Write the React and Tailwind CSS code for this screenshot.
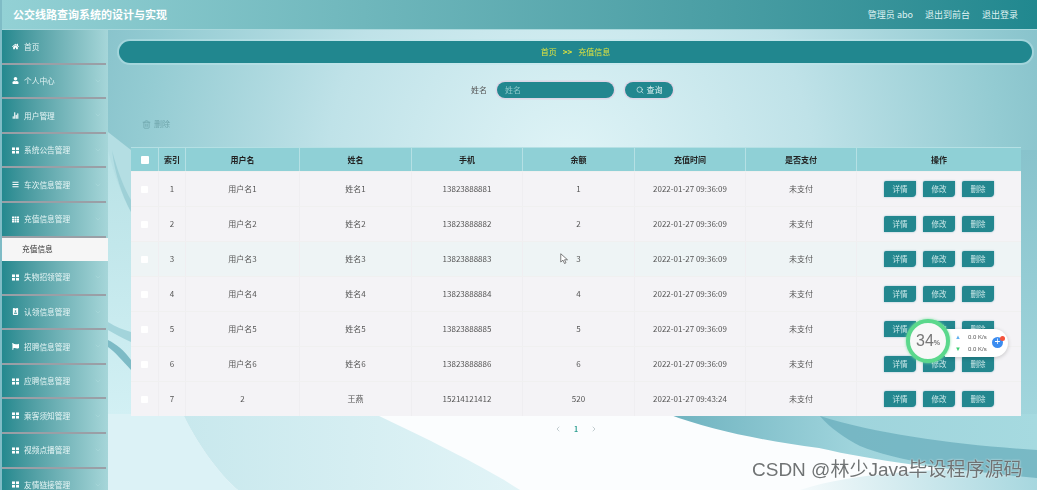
import React from "react";
import { FaHome, FaUser, FaBars, FaTh, FaFlag, FaIdBadge } from "react-icons/fa";
import { IoStatsChart } from "react-icons/io5";
import { LuSearch, LuTrash2, LuChevronLeft, LuChevronRight, LuChevronDown } from "react-icons/lu";

const GridIcon = () => (
  <svg viewBox="0 0 8 8" className="w-[7px] h-[7px]" fill="currentColor">
    <rect x="0" y="0.5" width="3.4" height="3" />
    <rect x="4.6" y="0.5" width="3.4" height="3" />
    <rect x="0" y="4.5" width="3.4" height="3" />
    <rect x="4.6" y="4.5" width="3.4" height="3" />
  </svg>
);

const menus = [
  { label: "首页", icon: <FaHome />, plain: true },
  { label: "个人中心", icon: <FaUser /> },
  { label: "用户管理", icon: <IoStatsChart /> },
  { label: "系统公告管理", icon: <GridIcon /> },
  { label: "车次信息管理", icon: <FaBars /> },
  { label: "充值信息管理", icon: <FaTh />, open: true },
  { label: "失物招领管理", icon: <GridIcon /> },
  { label: "认领信息管理", icon: <FaIdBadge /> },
  { label: "招聘信息管理", icon: <FaFlag /> },
  { label: "应聘信息管理", icon: <GridIcon /> },
  { label: "乘客须知管理", icon: <GridIcon /> },
  { label: "视频点播管理", icon: <GridIcon /> },
  { label: "友情链接管理", icon: <GridIcon /> },
];

const rows = [1, 2, 3, 4, 5, 6].map((i) => ({
  id: i,
  user: `用户名${i}`,
  name: `姓名${i}`,
  phone: `1382388888${i}`,
  balance: i,
  time: "2022-01-27 09:36:09",
}));
rows.push({ id: 7, user: "2", name: "王燕", phone: "15214121412", balance: 520, time: "2022-01-27 09:43:24" });

const columns = "grid grid-cols-[27px_27px_114px_112px_111px_112px_111px_111px_1fr]";

const Background = () => (
  <svg viewBox="0 0 1037 490" className="absolute inset-0 w-full h-full" preserveAspectRatio="none">
    <defs>
      <radialGradient id="sky" gradientUnits="userSpaceOnUse" cx="570" cy="170" r="540">
        <stop offset="0" stopColor="#e0f4f7" />
        <stop offset="0.45" stopColor="#bfe2e8" />
        <stop offset="0.8" stopColor="#93cbd2" />
        <stop offset="1" stopColor="#7fbcc6" />
      </radialGradient>
      <linearGradient id="leftStrip" x1="0" y1="0" x2="0" y2="1">
        <stop offset="0" stopColor="#b9e2e6" />
        <stop offset="1" stopColor="#d2f0f4" />
      </linearGradient>
      <linearGradient id="rightStrip" x1="0" y1="0" x2="0" y2="1">
        <stop offset="0" stopColor="#88c3cc" />
        <stop offset="1" stopColor="#a2d6dd" />
      </linearGradient>
      <linearGradient id="band" x1="0" y1="0" x2="1" y2="0">
        <stop offset="0" stopColor="#c8e8ed" />
        <stop offset="1" stopColor="#e2f4f7" />
      </linearGradient>
      <linearGradient id="wave" gradientUnits="userSpaceOnUse" x1="670" y1="416" x2="1037" y2="416">
        <stop offset="0" stopColor="#6eb2bf" />
        <stop offset="0.5" stopColor="#9fd4dc" />
        <stop offset="1" stopColor="#a6dae0" />
      </linearGradient>
      <linearGradient id="waveLow" gradientUnits="userSpaceOnUse" x1="780" y1="490" x2="1037" y2="450">
        <stop offset="0" stopColor="#fbfdfe" />
        <stop offset="1" stopColor="#a5d6de" />
      </linearGradient>
    </defs>
    <rect width="1037" height="490" fill="url(#sky)" />
    <rect x="106" y="150" width="27" height="266" fill="url(#leftStrip)" />
    <rect x="1019" y="150" width="18" height="270" fill="url(#rightStrip)" />
    <path d="M108 132 L131 150 L131 212 C 122 195 114 175 108 150 Z" fill="#b4dee3" />
    <path d="M112 150 C 117 170 124 188 131 200 L131 212 C 122 195 115 175 112 150 Z" fill="#9ed0d7" />
    <path d="M108 322 C 116 327 124 330 131 332 L131 342 C 122 338 115 334 108 330 Z" fill="#a3d4db" />
    <path d="M108 340 C 116 344 124 350 131 360 L131 370 C 122 360 115 352 108 347 Z" fill="#7dbbc6" />
    <rect x="106" y="414" width="931" height="76" fill="#fbfdfe" />
    <path d="M106 414 L183 414 C 200 450 225 480 238 490 L106 490 Z" fill="#dcf2f6" />
    <path d="M183 414 L375 414 C 430 440 490 470 520 490 L238 490 C 225 480 200 450 183 414 Z" fill="url(#band)" />
    <path d="M800 490 C 860 470 950 470 1037 465 L1037 490 Z" fill="url(#waveLow)" />
    <path d="M668 414 L1037 414 L1037 478 C 950 470 880 462 819 448 C 760 440 710 430 668 414 Z" fill="url(#wave)" />
    <path d="M820 416 C 880 435 960 445 1037 450 L1037 478 C 970 472 900 462 860 446 C 845 438 830 428 820 416 Z" fill="#69aebc" opacity="0.75" />
  </svg>
);

const Sidebar = () => (
  <aside className="w-[106px] shrink-0">
    {menus.map((m) => (
      <div key={m.label}>
        <div className="relative h-[34.6px] pb-[2px] bg-gradient-to-r from-[#23898f] to-[#a6d6d9]">
          <div className="h-full flex items-center pl-[10px] text-[7.7px] text-[#e4f4f4]">
            <span className="w-[12px] flex items-center text-[7px] text-white">{m.icon}</span>
            <span>{m.label}</span>
            {!m.plain && <LuChevronDown className="ml-auto mr-[6px] text-[8px] text-[#a9d8da]" />}
          </div>
          <div className="absolute left-0 bottom-0 w-[104px] h-[2px] bg-[#9a9fa6]" />
        </div>
        {m.open && (
          <div className="h-[23.4px] bg-[#f6f6f6] flex items-center pl-[20px] pb-[1px] text-[7.7px] text-[#333]">充值信息</div>
        )}
      </div>
    ))}
  </aside>
);

const Table = () => (
  <div className="w-[890px] text-[8px] text-[#555]">
    <div className={`${columns} h-[24px] bg-[#8fd0d6] text-[#222] font-bold border-t border-[#b5e0e4]`}>
      <div className="flex items-center justify-center">
        <span className="w-[8px] h-[8px] bg-white rounded-[1px]" />
      </div>
      {["索引", "用户名", "姓名", "手机", "余额", "充值时间", "是否支付", "操作"].map((h) => (
        <div key={h} className="flex items-center justify-center border-l border-[#b5e0e4]">{h}</div>
      ))}
    </div>
    {rows.map((r) => (
      <div key={r.id} className={`${columns} h-[35px] ${r.id === 3 ? "bg-[#eef4f5]" : "bg-[#f4f3f6]"} border-t border-[#f0f0f0]`}>
        <div className="flex items-center justify-center">
          <span className="w-[7px] h-[7px] bg-white rounded-[1px]" />
        </div>
        {[r.id, r.user, r.name, r.phone, r.balance, r.time, "未支付"].map((v, i) => (
          <div key={i} className="flex items-center justify-center border-l border-[#efeef1]">{v}</div>
        ))}
        <div className="flex items-center justify-center gap-[7px] border-l border-[#efeef1]">
          {["详情", "修改", "删除"].map((b) => (
            <button
              key={b}
              className="w-[32px] h-[16px] bg-[#23878f] text-[#cfe9ea] text-[7.5px] rounded-tl-[2px] rounded-br-[4px] shadow-[0_0_2px_#8fb8c8]"
            >
              {b}
            </button>
          ))}
        </div>
      </div>
    ))}
  </div>
);

const NetWidget = () => (
  <div className="absolute left-[906px] top-[319px] flex items-start font-['Liberation_Sans',sans-serif]">
    <div className="relative z-10 w-[44px] h-[44px] rounded-full bg-[#f8f8f8] border-[4px] border-[#5bd88c] shadow-[0_0_3px_#7fe0a4] flex items-center justify-center text-[#777]">
      <span className="text-[16px] leading-none">34</span>
      <span className="text-[7px] font-bold mt-[4px]">%</span>
    </div>
    <div className="relative -ml-[5px] mt-[10px] w-[63px] h-[28px] rounded-r-full bg-white shadow-[0_1px_4px_rgba(0,0,0,0.2)] pl-[10px] text-[6px] leading-none text-[#555] flex flex-col justify-center gap-[6px]">
      <div className="w-fit flex items-center gap-[7px]"><span className="text-[#60b0f0] text-[6px]">▲</span><span>0.0 K/s</span></div>
      <div className="w-fit flex items-center gap-[7px]"><span className="text-[#3ecf74] text-[6px]">▼</span><span>0.0 K/s</span></div>
      <span className="absolute right-[5px] top-[8px] w-[11px] h-[11px] rounded-full bg-[#3b8cf0] text-white text-[10px] leading-[10px] text-center">+</span>
      <span className="absolute right-[3px] top-[7px] w-[5px] h-[5px] rounded-full bg-[#f4523b]" />
    </div>
  </div>
);

export default function App() {
  return (
    <div className="relative w-[1037px] h-[490px] overflow-hidden bg-white font-['Noto_Sans_CJK_SC','Liberation_Sans',sans-serif]">
      <Background />
      <div className="relative h-full pl-[2px] blur-[0.4px]">
        <header className="relative h-[30px] flex items-center pl-[11px] pr-[19px] bg-gradient-to-r from-[#93d1d5] to-[#20888f] border-b border-[#a9d8dc] text-white">
          <h1 className="text-[11px] font-bold">公交线路查询系统的设计与实现</h1>
          <div className="ml-auto flex gap-[12px] text-[9px] text-[#dff2f2]">
            <span>管理员 abo</span>
            <span>退出到前台</span>
            <span>退出登录</span>
          </div>
        </header>
        <div className="relative flex">
          <Sidebar />
          <main className="flex-1 pl-[13px] pt-[11px]">
            <div className="w-[913px] h-[22px] -ml-[2px] rounded-full bg-[#21878f] shadow-[0_0_0_2px_rgba(190,230,235,0.45)] flex items-center justify-center text-[8px] text-[#dfe23f] gap-[6px]">
              <span>首页</span><span className="font-bold">&gt;&gt;</span><span>充值信息</span>
            </div>
            <div className="mt-[18px] h-[18px] flex items-center pl-[350px] text-[8px] text-[#555]">
              <span>姓名</span>
              <div className="ml-[10px] w-[117px] h-[16px] rounded-full bg-[#23878f] shadow-[0_0_0_1.5px_#dcd6e6] pl-[8px] flex items-center text-[#8fc9cc]">姓名</div>
              <button className="ml-[11px] w-[48px] h-[16px] rounded-full bg-[#23878f] shadow-[0_0_0_1.5px_#dcd6e6] flex items-center justify-center gap-[3px] text-[#e2f3f3]">
                <LuSearch className="text-[8px]" />查询
              </button>
            </div>
            <div className="mt-[16px] h-[18px] pl-[21px] flex items-center gap-[3px] text-[8px] text-[#6fa5ab]">
              <LuTrash2 className="text-[9px]" />删除
            </div>
            <div className="mt-[14px] pl-[10px]">
              <Table />
              <div className="mt-[8px] pl-[423px] flex items-center gap-[12px] text-[7px] text-[#a5b5b8]">
                <LuChevronLeft className="text-[8px]" />
                <span className="text-[#2a9d8f] font-bold">1</span>
                <LuChevronRight className="text-[8px]" />
              </div>
            </div>
          </main>
        </div>
        <NetWidget />
        <svg viewBox="0 0 12 16" className="absolute left-[560px] top-[253px] w-[9px] h-[12px]" fill="#fff" stroke="#555" strokeWidth="1">
          <path d="M1 1 L1 12 L4 9.5 L6 14 L8 13 L6 9 L10 9 Z" />
        </svg>
      </div>
      <div className="absolute left-[752px] top-[457px] text-[19px] leading-[26px] text-[#6f7374] font-['Liberation_Sans','Noto_Sans_CJK_SC',sans-serif] [text-shadow:0_0_2px_#fff]">
        CSDN @林少Java毕设程序源码
      </div>
    </div>
  );
}
